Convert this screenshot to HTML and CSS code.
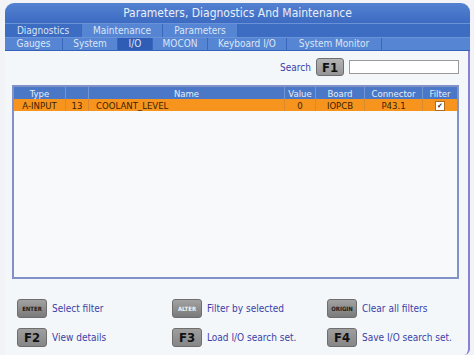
FILE: index.html
```html
<!DOCTYPE html>
<html lang="en">
<head>
  <meta charset="UTF-8" />
  <title>Parameters, Diagnostics And Maintenance</title>
  <link rel="stylesheet" href="styles.css">
</head>
<body>
  <div class="panel">
    <div class="titlebar">Parameters, Diagnostics And Maintenance</div>

    <div class="tabs top-tabs">
      <div class="tab active w-diag">Diagnostics</div>
      <div class="tab w-maint">Maintenance</div>
      <div class="tab w-param">Parameters</div>
      <div class="tab-rest"></div>
    </div>
    <div class="tabs sub-tabs">
      <div class="tab w-gauges">Gauges</div>
      <div class="tab w-system">System</div>
      <div class="tab active w-io">I/O</div>
      <div class="tab w-mocon">MOCON</div>
      <div class="tab w-kbd">Keyboard I/O</div>
      <div class="tab w-mon">System Monitor</div>
      <div class="tab-rest"></div>
    </div>

    <div class="content">
      <div class="search-row">
        <span class="search-label">Search</span>
        <span class="key key-f search-key">F1</span>
        <div class="search-box"></div>
      </div>

      <div class="table-box">
        <table>
          <thead>
            <tr>
              <th class="c-type">Type</th>
              <th class="c-num"></th>
              <th class="c-name">Name</th>
              <th class="c-val">Value</th>
              <th class="c-board">Board</th>
              <th class="c-conn">Connector</th>
              <th class="c-filter">Filter</th>
            </tr>
          </thead>
          <tbody>
            <tr class="selected">
              <td>A-INPUT</td>
              <td>13</td>
              <td class="left">COOLANT_LEVEL</td>
              <td>0</td>
              <td>IOPCB</td>
              <td>P43.1</td>
              <td><span class="check">&#10004;</span></td>
            </tr>
          </tbody>
        </table>
      </div>

      <div class="keys">
        <div class="key-item"><span class="key key-small">ENTER</span><span class="key-text">Select filter</span></div>
        <div class="key-item"><span class="key key-small light">ALTER</span><span class="key-text">Filter by selected</span></div>
        <div class="key-item"><span class="key key-small">ORIGIN</span><span class="key-text">Clear all filters</span></div>
        <div class="key-item"><span class="key key-f">F2</span><span class="key-text">View details</span></div>
        <div class="key-item"><span class="key key-f">F3</span><span class="key-text">Load I/O search set.</span></div>
        <div class="key-item"><span class="key key-f">F4</span><span class="key-text">Save I/O search set.</span></div>
      </div>
    </div>
  </div>
</body>
</html>
```

FILE: styles.css
```css
body {
  margin: 0;
  padding: 0;
  background-color: #f1f3f6;
  font-family: "DejaVu Sans Condensed", "DejaVu Sans", Verdana, sans-serif;
  font-stretch: condensed;
  font-size: 10px;
}
.panel {
  margin: 3px 0 0 5px;
  width: 465px;
  height: 352px;
  display: flex;
  flex-direction: column;
}
.titlebar {
  height: 20px;
  line-height: 20px;
  text-align: center;
  color: #e9eef9;
  font-size: 12px;
  background: linear-gradient(#5481d0, #3c6bc2);
  border-radius: 9px 9px 0 0;
  border-bottom: 1px solid #6a92d8;
}
.tabs {
  display: flex;
  background-color: #3d6cc3;
}
.top-tabs {
  height: 13px;
  border-bottom: 1px solid #6a92d8;
}
.sub-tabs {
  height: 12px;
  border-bottom: 1px solid #3462b8;
}
.tab {
  text-align: center;
  line-height: 13px;
  color: #dce5f6;
  background-color: #5585d3;
  border-right: 1px solid #3a68bd;
  box-sizing: border-box;
  white-space: nowrap;
}
.sub-tabs .tab {
  line-height: 12px;
}
.tab.active {
  background-color: #2f5db5;
}
.top-tabs .tab.active {
  background-color: #3d6cc3;
}
.tab-rest {
  flex: 1;
}
.sub-tabs .tab-rest {
  background-color: #5585d3;
}
.w-diag { width: 77px; }
.w-maint { width: 81px; }
.w-param { width: 75px; }
.w-gauges { width: 58px; }
.w-system { width: 55px; }
.w-io { width: 35px; }
.w-mocon { width: 55px; }
.w-kbd { width: 79px; }
.w-mon { width: 95px; }

.content {
  flex: 1;
  background-color: #f4f7fa;
  border-right: 2px solid #8a80d4;
  border-radius: 0 0 6px 0;
  padding: 7px 9px 0 7px;
}
.search-row {
  display: flex;
  justify-content: flex-end;
  align-items: center;
  height: 18px;
}
.search-label {
  color: #3b3fa8;
  margin-right: 5px;
}
.search-box {
  width: 108px;
  height: 12px;
  background-color: #fff;
  border: 1px solid #9a9a9a;
  margin-left: 5px;
}
.table-box {
  margin-top: 9px;
  height: 190px;
  border: 2px solid #8292c9;
  background-color: #f7f9fb;
}
table {
  width: 100%;
  border-collapse: collapse;
  font-size: 9.5px;
}
th {
  height: 12px;
  padding: 0;
  font-weight: normal;
  color: #e8edf8;
  background-color: #4a78c7;
  border-left: 1px solid #7196d6;
}
th:first-child {
  border-left: none;
}
td {
  height: 12px;
  padding: 0;
  text-align: center;
  color: #3b1f00;
  border-left: 1px solid #d88a2c;
}
td:first-child {
  border-left: none;
}
td.left {
  text-align: left;
  padding-left: 7px;
}
.selected td {
  background-color: #f7941e;
}
.c-type { width: 51px; }
.c-num { width: 22px; }
.c-val { width: 30px; }
.c-board { width: 48px; }
.c-conn { width: 57px; }
.c-filter { width: 34px; }
.check {
  display: inline-block;
  width: 8px;
  height: 8px;
  line-height: 8px;
  font-size: 7px;
  background-color: #fff;
  color: #222;
  border: 1px solid #b06a1a;
  vertical-align: middle;
}
.keys {
  display: grid;
  grid-template-columns: 155px 155px 1fr;
  row-gap: 10px;
  margin-top: 20px;
  padding-left: 5px;
}
.key-item {
  display: flex;
  align-items: center;
}
.key {
  display: inline-flex;
  justify-content: center;
  align-items: center;
  width: 30px;
  height: 19px;
  flex-shrink: 0;
  box-sizing: border-box;
  border: 1px solid #6e6e6e;
  border-radius: 3px;
  background: linear-gradient(#a2a2a2, #7a7a7a);
}
.key-small {
  font-size: 6px;
  font-weight: bold;
  color: #1c1c1c;
}
.key-small.light {
  color: #f2f2f2;
}
.key-f {
  font-size: 13px;
  font-weight: bold;
  color: #111;
  background: linear-gradient(#9e9e9e, #868686);
}
.search-key {
  width: 28px;
  height: 18px;
  background: linear-gradient(#b4b4b4, #959595);
}
.key-text {
  margin-left: 5px;
  color: #3b3fa8;
  white-space: nowrap;
}
```
